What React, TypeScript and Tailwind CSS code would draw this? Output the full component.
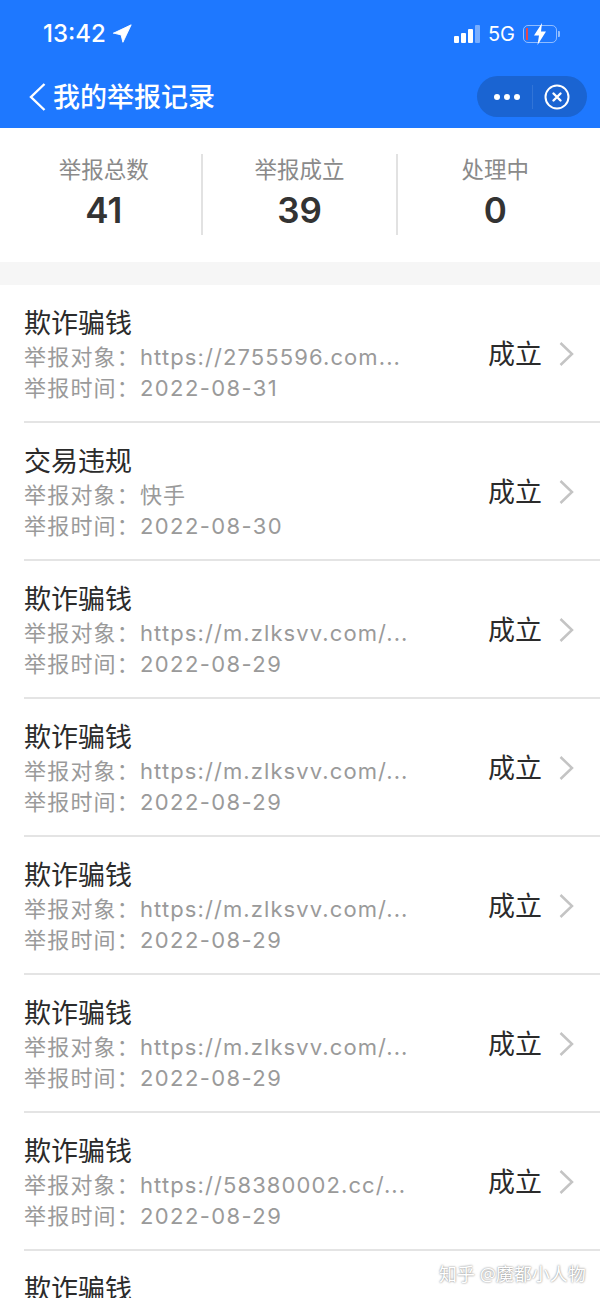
import { Navigation } from 'lucide-react';

const CJK = 'font-["Open_Sans","Noto_Sans_CJK_SC",sans-serif]';
const SUB = 'font-["Inter","Noto_Sans_CJK_SC",sans-serif]';

const STATS = [
  { label: '举报总数', value: '41' },
  { label: '举报成立', value: '39' },
  { label: '处理中', value: '0' },
];

const RECORDS = [
  { type: '欺诈骗钱', target: 'https://2755596.com...', date: '2022-08-31' },
  { type: '交易违规', target: '快手', date: '2022-08-30' },
  { type: '欺诈骗钱', target: 'https://m.zlksvv.com/...', date: '2022-08-29' },
  { type: '欺诈骗钱', target: 'https://m.zlksvv.com/...', date: '2022-08-29' },
  { type: '欺诈骗钱', target: 'https://m.zlksvv.com/...', date: '2022-08-29' },
  { type: '欺诈骗钱', target: 'https://m.zlksvv.com/...', date: '2022-08-29' },
  { type: '欺诈骗钱', target: 'https://58380002.cc/...', date: '2022-08-29' },
  { type: '欺诈骗钱', target: '', date: '' },
];

function StatusBar() {
  return (
    <div className="flex h-[68px] items-start justify-between pl-[43px] pr-[43px] pt-[20px] text-white">
      <div className="flex items-center gap-[5px]">
        <span className='font-["Inter",sans-serif] text-[24px] leading-[28px] font-medium'>13:42</span>
        <Navigation className="h-[22px] w-[22px]" fill="white" strokeWidth={1} />
      </div>
      <div className="flex items-center">
        <div className="mr-[8px] flex items-end gap-[2px]">
          <div className="h-[7px] w-[5px] rounded-[1px] bg-white" />
          <div className="h-[10px] w-[5px] rounded-[1px] bg-white" />
          <div className="h-[14px] w-[5px] rounded-[1px] bg-white" />
          <div className="h-[18px] w-[5px] rounded-[1px] bg-white/40" />
        </div>
        <span className='mr-[8px] font-["Inter",sans-serif] text-[20px] leading-[28px]'>5G</span>
        <div className="relative h-[18px] w-[34px] rounded-[5px] border border-white/50 p-[2px]">
          <div className="h-full w-[2px] bg-[#e5484d]" />
          <svg viewBox="0 0 14 22" className="absolute left-[9px] top-[-3px] h-[22px] w-[14px]">
            <path d="M9 0 L1 12.5 H6 L4.5 22 L13 8.5 H8 Z" fill="white" />
          </svg>
          <div className="absolute right-[-4px] top-[5px] h-[6px] w-[2px] rounded-r-[1px] bg-white/50" />
        </div>
      </div>
    </div>
  );
}

function NavBar() {
  return (
    <div className="flex h-[60px] items-start justify-between pl-[29px] pr-[13px]">
      <div className="flex items-center pt-[9px] text-white">
        <svg viewBox="0 0 17 28" className="h-[28px] w-[17px]" fill="none" stroke="white" strokeWidth="2.4">
          <path d="M15.5 1 L2 14 L15.5 27" />
        </svg>
        <span className={`${CJK} ml-[7px] text-[27px] leading-[40px] font-medium`}>我的举报记录</span>
      </div>
      <div className="mt-[8px] flex h-[41px] w-[110px] items-center rounded-full bg-[#1a64d2]">
        <div className="flex flex-1 items-center justify-center gap-[4px] pl-[4px]">
          <div className="h-[6px] w-[6px] rounded-full bg-white" />
          <div className="h-[6px] w-[6px] rounded-full bg-white" />
          <div className="h-[6px] w-[6px] rounded-full bg-white" />
        </div>
        <div className="h-[24px] w-px bg-white/10" />
        <div className="flex w-[54px] items-center justify-center pr-[7px]">
          <svg viewBox="0 0 26 26" className="h-[26px] w-[26px]" fill="none" stroke="white">
            <circle cx="13" cy="13" r="11.5" strokeWidth="2" />
            <path d="M9.5 9.5 L16.5 16.5 M16.5 9.5 L9.5 16.5" strokeWidth="2.4" strokeLinecap="round" />
          </svg>
        </div>
      </div>
    </div>
  );
}

function Stats() {
  return (
    <div className="flex h-[134px] items-start bg-white pl-[7px] pr-[8px] pt-[26px]">
      {STATS.map((s, i) => (
        <div key={s.label} className={`flex h-[81px] flex-1 flex-col items-center ${i < 2 ? 'border-r-2 border-[#e2e2e2]' : ''}`}>
          <span className={`${CJK} text-[22.5px] leading-[32px] text-[#8a8a8a]`}>{s.label}</span>
          <span className='mt-[2px] font-["Inter",sans-serif] text-[35px] leading-[44px] font-semibold text-[#333333]'>{s.value}</span>
        </div>
      ))}
    </div>
  );
}

function RecordRow({ type, target, date }: { type: string; target: string; date: string }) {
  return (
    <div className="ml-[24px] flex h-[138px] items-center justify-between border-b-2 border-[#e4e4e4] pt-[2px] pr-[26px]">
      <div className="flex flex-col">
        <span className={`${CJK} text-[27px] leading-[38px] text-[#2b2b2b]`}>{type}</span>
        <span className={`${SUB} text-[22px] leading-[31px] tracking-[1.2px] text-[#9a9a9a]`}>
          举报对象：<span className="tracking-[1.1px]">{target}</span>
        </span>
        <span className={`${SUB} text-[22px] leading-[31px] tracking-[1.2px] text-[#9a9a9a]`}>
          举报时间：<span className="tracking-[1.4px]">{date}</span>
        </span>
      </div>
      <div className="flex items-center gap-[17px]">
        <span className={`${CJK} text-[27px] leading-[38px] text-[#2b2b2b]`}>成立</span>
        <svg viewBox="0 0 15 24" className="h-[24px] w-[15px]" fill="none" stroke="#c4c4c4" strokeWidth="2.5">
          <path d="M1.5 1 L13 12 L1.5 23" />
        </svg>
      </div>
    </div>
  );
}

export default function App() {
  return (
    <div className="relative h-[1298px] w-[600px] overflow-hidden bg-white">
      <div className="bg-[#1e78ff]">
        <StatusBar />
        <NavBar />
      </div>
      <Stats />
      <div className="h-[23px] bg-[#f6f6f6]" />
      {RECORDS.map((r, i) => (
        <RecordRow key={i} {...r} />
      ))}
      <div className={`${CJK} absolute left-[439px] top-[1262px] text-[18px] leading-[24px] text-white [text-shadow:0_0_2px_rgba(0,0,0,0.6)]`}>
        知乎 @魔都小人物
      </div>
    </div>
  );
}
